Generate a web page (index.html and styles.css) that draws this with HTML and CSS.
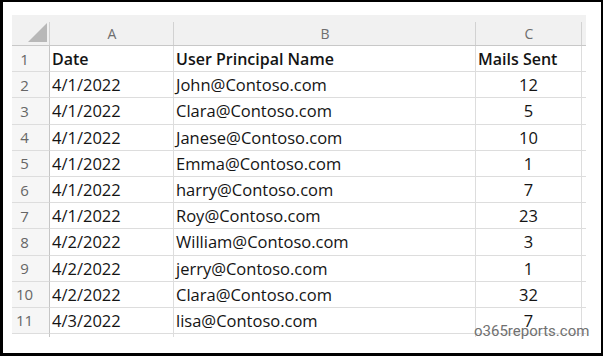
FILE: index.html
```html
<!DOCTYPE html>
<html>
<head>
<meta charset="utf-8">
<link rel="stylesheet" href="styles.css">
</head>
<body>
<div class="frame">
  <div class="sheet">
    <div class="hdr corner"><svg width="19" height="19" viewBox="0 0 19 19"><polygon points="19,0 19,19 0,19" fill="#b8b8b8"/></svg></div>
    <div class="hdr col">A</div>
    <div class="hdr col">B</div>
    <div class="hdr col">C</div>
    <div class="hdr stub"></div>

    <div class="rn">1</div><div class="c b">Date</div><div class="c b">User Principal Name</div><div class="c b">Mails Sent</div><div class="c s"></div>
    <div class="rn">2</div><div class="c">4/1/2022</div><div class="c">John@Contoso.com</div><div class="c n">12</div><div class="c s"></div>
    <div class="rn">3</div><div class="c">4/1/2022</div><div class="c">Clara@Contoso.com</div><div class="c n">5</div><div class="c s"></div>
    <div class="rn">4</div><div class="c">4/1/2022</div><div class="c">Janese@Contoso.com</div><div class="c n">10</div><div class="c s"></div>
    <div class="rn">5</div><div class="c">4/1/2022</div><div class="c">Emma@Contoso.com</div><div class="c n">1</div><div class="c s"></div>
    <div class="rn">6</div><div class="c">4/1/2022</div><div class="c">harry@Contoso.com</div><div class="c n">7</div><div class="c s"></div>
    <div class="rn">7</div><div class="c">4/1/2022</div><div class="c">Roy@Contoso.com</div><div class="c n">23</div><div class="c s"></div>
    <div class="rn">8</div><div class="c">4/2/2022</div><div class="c">William@Contoso.com</div><div class="c n">3</div><div class="c s"></div>
    <div class="rn">9</div><div class="c">4/2/2022</div><div class="c">jerry@Contoso.com</div><div class="c n">1</div><div class="c s"></div>
    <div class="rn">10</div><div class="c">4/2/2022</div><div class="c">Clara@Contoso.com</div><div class="c n">32</div><div class="c s"></div>
    <div class="rn">11</div><div class="c">4/3/2022</div><div class="c">lisa@Contoso.com</div><div class="c n">7</div><div class="c s"></div>

    <div class="tail rnt"></div><div class="tail"></div><div class="tail"></div><div class="tail"></div><div class="tail s"></div>
  </div>
  <div class="mark">o365reports.com</div>
</div>
</body>
</html>
```

FILE: styles.css
```css
html, body {
  margin: 0;
  padding: 0;
  background: #ffffff;
}

.frame {
  position: relative;
  box-sizing: border-box;
  width: 603px;
  height: 356px;
  border-style: solid;
  border-color: #000000;
  border-width: 2px 2px 3px 3px;
  padding: 13px 0 0 9px;
  background: #ffffff;
}

.sheet {
  display: grid;
  grid-template-columns: 38px 124px 302px 106px 4px;
  grid-template-rows: 31px repeat(11, 26.2px) 3px;
  font-family: "Open Sans", "Noto Sans", sans-serif;
}

.sheet > div {
  box-sizing: border-box;
  min-width: 0;
  overflow: hidden;
  white-space: nowrap;
}

.hdr {
  background: #f1f1f1;
  border-bottom: 1px solid #c8c8c8;
}

.corner,
.col {
  background: linear-gradient(#d2d2d2, #d2d2d2) right bottom / 1px 23px no-repeat, #f1f1f1;
}

.corner {
  display: flex;
  align-items: flex-end;
  justify-content: flex-end;
  padding: 0 3px 3px 0;
}

.corner svg {
  display: block;
}

.col {
  display: flex;
  align-items: center;
  justify-content: center;
  padding-top: 6px;
  font-size: 14px;
  color: #6e6e6e;
}

.rn {
  background: #f6f6f6;
  border-right: 1px solid #c6c6c6;
  border-bottom: 1px solid #dddddd;
  display: flex;
  align-items: center;
  justify-content: center;
  padding-right: 12px;
  font-size: 15px;
  color: #666666;
}

.c {
  border-right: 1px solid #dddddd;
  border-bottom: 1px solid #dddddd;
  display: flex;
  align-items: center;
  padding-left: 2px;
  font-size: 16.5px;
  color: #141414;
}

.c.b {
  font-size: 16px;
  font-weight: 600;
}

.c.n {
  justify-content: center;
  padding-left: 0;
}

.sheet > .s {
  border-right: none;
}

.tail {
  border-right: 1px solid #dddddd;
}

.tail.rnt {
  border-right-color: #c6c6c6;
}

.mark {
  position: absolute;
  left: 471px;
  top: 322px;
  font-family: Roboto, "Liberation Sans", sans-serif;
  font-size: 15px;
  line-height: 15px;
  color: #707070;
}
```
